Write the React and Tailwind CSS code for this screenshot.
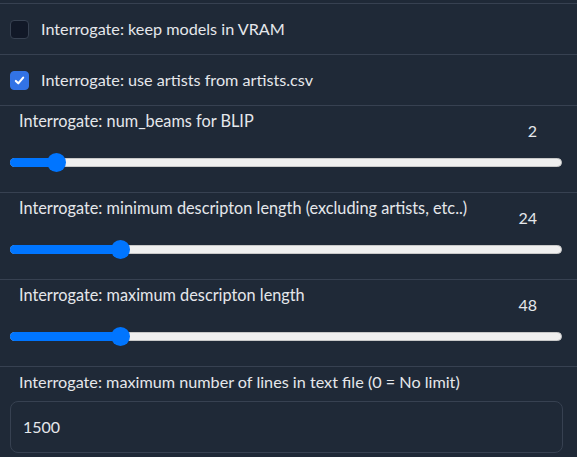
import React from "react";

const sliders = [
  { label: "Interrogate: num_beams for BLIP", value: 2, min: 1, max: 16 },
  { label: "Interrogate: minimum descripton length (excluding artists, etc..)", value: 24, min: 0, max: 128 },
  { label: "Interrogate: maximum descripton length", value: 48, min: 0, max: 256 },
];

const CheckRow = ({ checked, label }) => (
  <div className="h-[51px] border-t border-[#374151] flex items-center pl-[10px] gap-3">
    {checked ? (
      <span className="w-[19px] h-[19px] rounded-[4px] bg-[#3273e6] border border-[#3273e6] flex items-center justify-center">
        <svg viewBox="0 0 16 16" className="w-[13px] h-[13px]" fill="none" stroke="white" strokeWidth="2.6" strokeLinecap="round" strokeLinejoin="round">
          <path d="M3.5 8.5l3 3 6-7" />
        </svg>
      </span>
    ) : (
      <span className="w-[19px] h-[19px] rounded-[4px] bg-[#111827] border border-[#374151]" />
    )}
    <span className="text-[16.2px] leading-5 text-[#e5e7eb]">{label}</span>
  </div>
);

const SliderRow = ({ label, value, min, max }) => {
  const frac = (value - min) / (max - min);
  // thumb is 19px, track 552px wide
  const center = 9.5 + frac * (552 - 19);
  return (
    <div className="h-[87px] border-t border-[#374151] flex flex-col">
      <div className="h-[40px] flex justify-between pl-[19px] pr-[40px]">
        <span className="pt-[5px] text-[16.3px] leading-5 text-[#e5e7eb]">{label}</span>
        <span className="mt-[15px] text-[16px] leading-5 text-[#e5e7eb]">{value}</span>
      </div>
      <div className="h-[32px] flex items-center pl-[10px]">
        <div className="relative w-[552px] h-[9px] rounded-full bg-[#efefef] border border-[#c8c8c8]">
          <div className="absolute left-[-1px] top-[-1px] h-[9px] rounded-full bg-[#0075ff]" style={{ width: center + 1 }} />
          <div className="absolute top-[-6px] w-[19px] h-[19px] rounded-full bg-[#0075ff]" style={{ left: center - 9.5 }} />
        </div>
      </div>
    </div>
  );
};

export default function App() {
  return (
    <div className="w-[577px] h-[457px] overflow-hidden bg-[#1f2937] pt-[3px]" style={{ fontFamily: "Lato, 'Noto Sans', sans-serif" }}>
      <CheckRow checked={false} label="Interrogate: keep models in VRAM" />
      <CheckRow checked={true} label="Interrogate: use artists from artists.csv" />
      {sliders.map((s) => (
        <SliderRow key={s.label} {...s} />
      ))}
      <div className="border-t border-[#374151] pt-[5px]">
        <div className="pl-[19px] text-[16.2px] leading-5 text-[#e5e7eb]">
          Interrogate: maximum number of lines in text file (0 = No limit)
        </div>
        <div className="mt-[9px] ml-[10px] w-[553px] h-[52px] rounded-lg border border-[#374151] bg-[#1f2937] flex items-center pl-[12px] text-[16px] text-[#e5e7eb]">
          1500
        </div>
      </div>
    </div>
  );
}
